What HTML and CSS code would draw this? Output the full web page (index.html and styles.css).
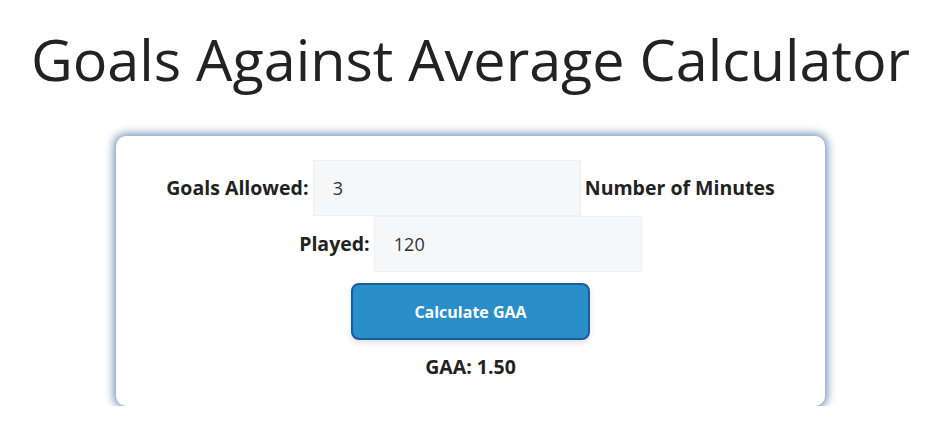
FILE: index.html
```html
<!DOCTYPE html>
<html>

	<head>
		<meta charset="UTF-8">
		<title>Goals Against Average Calculator</title>
		<link rel="stylesheet" href="styles.css">
	</head>

	<body>
		<h1 class="title">Goals Against Average Calculator</h1>
		<div class="card">
			<form class="calc" onsubmit="return false;">
				<label for="goals">Goals Allowed:</label>
				<input type="text" id="goals" class="field" value="3">
				<label for="minutes">Number of Minutes Played:</label>
				<input type="text" id="minutes" class="field" value="120">
				<button type="button" class="btn" id="calc">Calculate GAA</button>
			</form>
			<p class="result" id="result">GAA: 1.50</p>
		</div>
		<script type="text/javascript">
			document.getElementById('calc').onclick = function() {
				var goals = parseFloat(document.getElementById('goals').value),
					minutes = parseFloat(document.getElementById('minutes').value);
				if (minutes > 0) {
					document.getElementById('result').innerHTML = 'GAA: ' + (goals * 60 / minutes).toFixed(2);
				}
			}
		</script>
	</body>

</html>
```
FILE: styles.css
```css
body {
	margin: 0;
	padding: 0 10px 0 0;
	font-family: "Open Sans", "Noto Sans", sans-serif;
	color: #222;
	background: #fff;
}

.title {
	margin: 20px 0 38px;
	font-size: 57.5px;
	font-weight: 400;
	line-height: 78px;
	text-align: center;
	color: #222;
}

.card {
	width: 669px;
	margin: 0 auto;
	padding: 24px 20px 26px;
	background: #fff;
	border-radius: 10px;
	box-shadow: 0 0 10px 2px rgba(70, 110, 160, 0.8);
	text-align: center;
}

.calc label {
	font-size: 19.5px;
	font-weight: 700;
	line-height: 56px;
	vertical-align: middle;
}

.calc .field {
	box-sizing: border-box;
	width: 268px;
	height: 56px;
	padding: 0 19px;
	border: 1px solid #eceef1;
	background: #f6f7f9;
	font-family: inherit;
	font-size: 18px;
	color: #333;
	vertical-align: middle;
	outline: none;
}

.btn {
	display: block;
	width: 239px;
	height: 57px;
	margin: 11px auto 0;
	border: 2px solid #1a5d9f;
	border-radius: 8px;
	background: #2a8fc8;
	color: #fff;
	font-family: inherit;
	font-size: 16px;
	font-weight: 700;
	box-shadow: 0 3px 6px rgba(0, 0, 0, 0.12);
	cursor: pointer;
}

.result {
	margin: 13px 0 0;
	font-size: 19.5px;
	font-weight: 700;
}
```
